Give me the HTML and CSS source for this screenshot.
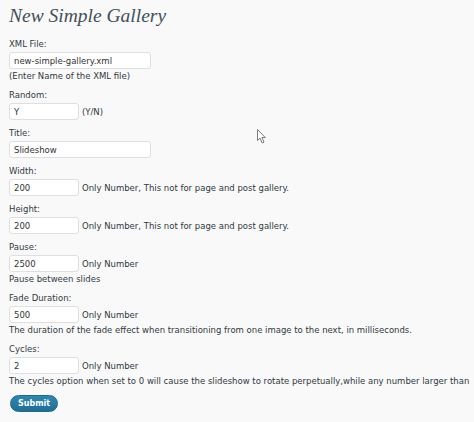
FILE: index.html
```
<!DOCTYPE html>
<html>
<head>
<meta charset="utf-8">
<link rel="stylesheet" href="styles.css">
</head>
<body>
<div class="wrap">
  <h2 class="title">New Simple Gallery</h2>
  <form class="form">
    <div class="field">
      <label class="label">XML File:</label>
      <div class="row"><input class="input wide" type="text" value="new-simple-gallery.xml"></div>
      <div class="desc">(Enter Name of the XML file)</div>
    </div>
    <div class="field">
      <label class="label">Random:</label>
      <div class="row"><input class="input short" type="text" value="Y"><span class="note">(Y/N)</span></div>
    </div>
    <div class="field">
      <label class="label">Title:</label>
      <div class="row"><input class="input wide" type="text" value="Slideshow"></div>
    </div>
    <div class="field">
      <label class="label">Width:</label>
      <div class="row"><input class="input short" type="text" value="200"><span class="note">Only Number, This not for page and post gallery.</span></div>
    </div>
    <div class="field">
      <label class="label">Height:</label>
      <div class="row"><input class="input short" type="text" value="200"><span class="note">Only Number, This not for page and post gallery.</span></div>
    </div>
    <div class="field">
      <label class="label">Pause:</label>
      <div class="row"><input class="input short" type="text" value="2500"><span class="note">Only Number</span></div>
      <div class="desc">Pause between slides</div>
    </div>
    <div class="field">
      <label class="label">Fade Duration:</label>
      <div class="row"><input class="input short" type="text" value="500"><span class="note">Only Number</span></div>
      <div class="desc">The duration of the fade effect when transitioning from one image to the next, in milliseconds.</div>
    </div>
    <div class="field">
      <label class="label">Cycles:</label>
      <div class="row"><input class="input short" type="text" value="2"><span class="note">Only Number</span></div>
      <div class="desc">The cycles option when set to 0 will cause the slideshow to rotate perpetually,while any number larger than</div>
    </div>
    <div class="actions"><button class="submit" type="button">Submit</button></div>
  </form>
  <svg class="cursor" width="10" height="15" viewBox="0 0 10 15"><path d="M0.5 0.5 L0.5 11.5 L3 9.2 L5.2 14 L7 13.2 L4.9 8.6 L8.3 8.6 Z" fill="#fff" stroke="#7a7a7a" stroke-width="1" stroke-linejoin="round"/></svg>
</div>
</body>
</html>
```
FILE: styles.css
```
html, body {
  margin: 0;
  padding: 0;
  background: #f9f9f9;
  overflow: hidden;
}
.wrap {
  position: relative;
  padding: 5px 9px 0 9px;
  font-family: "DejaVu Sans", Verdana, sans-serif;
  font-size: 8.5px;
  color: #2f3a42;
  width: 474px;
  box-sizing: border-box;
}
.title {
  margin: 0;
  font-family: "Liberation Serif", Georgia, serif;
  font-style: italic;
  font-weight: normal;
  font-size: 19.5px;
  line-height: 22px;
  color: #41505b;
}
.form {
  display: flex;
  flex-direction: column;
  margin-top: 11px;
  white-space: nowrap;
}
.field {
  display: flex;
  flex-direction: column;
  margin-bottom: 7px;
}
.label {
  line-height: 12px;
  height: 12px;
}
.row {
  display: flex;
  align-items: center;
  margin-top: 2px;
}
.input {
  box-sizing: border-box;
  height: 17px;
  border: 1px solid #dfdfdf;
  border-radius: 3px;
  background: #fff;
  font-family: "DejaVu Sans", Verdana, sans-serif;
  font-size: 8.5px;
  color: #333;
  padding: 0 4px;
  margin: 0;
  outline: none;
}
.input.wide { width: 142px; }
.input.short { width: 70px; }
.note {
  margin-left: 3px;
  line-height: 12px;
}
.desc {
  line-height: 12px;
  margin-top: 1px;
}
.actions {
  margin-top: 1px;
}
.submit {
  display: block;
  margin-left: 1px;
  width: 48px;
  height: 17px;
  border: 1px solid #1e6a8d;
  border-radius: 9px;
  background: linear-gradient(#2e86b3, #1f6e96);
  color: #fff;
  font-family: "DejaVu Sans", Verdana, sans-serif;
  font-weight: bold;
  font-size: 8px;
  padding: 0;
}
.cursor {
  position: absolute;
  left: 257px;
  top: 129px;
}
```
